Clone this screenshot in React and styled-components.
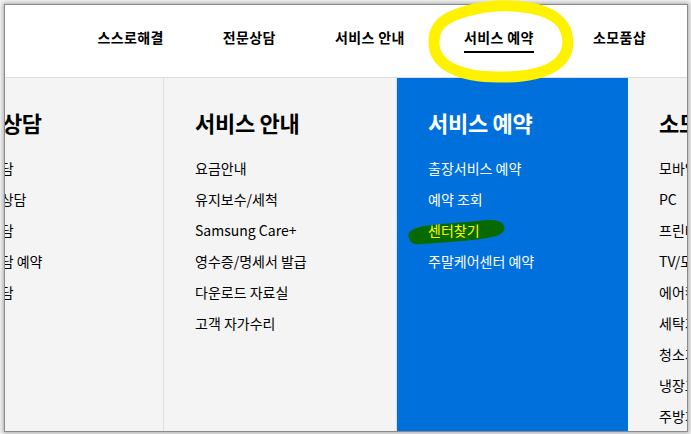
import * as React from "react";
import styled, { createGlobalStyle } from "styled-components";

const GlobalStyle = createGlobalStyle`
  html, body {
    margin: 0;
    padding: 0;
    background: #fff;
  }
  body {
    font-family: "Noto Sans CJK KR", "Noto Sans", sans-serif;
    color: #000;
  }
`;

const Page = styled.div`
  position: relative;
  width: 691px;
  height: 434px;
  overflow: hidden;
  background: #f2f2f2;
`;

const Frame = styled.div`
  position: absolute;
  left: 4px;
  top: 4px;
  width: 682px;
  height: 426px;
  border: 1px solid #8a8a8a;
  box-shadow: 0 0 4px 1px rgba(0, 0, 0, 0.3);
  background: #f4f4f4;
  overflow: hidden;
  display: flex;
  flex-direction: column;
`;

const Header = styled.header`
  height: 73px;
  flex: none;
  background: #fff;
  border-bottom: 1px solid #dcdcdc;
  display: flex;
  justify-content: flex-end;
  align-items: center;
  padding-right: 41px;
  padding-bottom: 9px;
  box-sizing: border-box;
`;

const Nav = styled.nav`
  display: flex;
  gap: 59px;
`;

const NavItem = styled.a`
  position: relative;
  font-size: 14px;
  font-weight: 700;
  line-height: 18px;
  letter-spacing: 0.4px;
  color: #000;
  white-space: nowrap;

  &::after {
    content: "";
    display: ${(p) => (p.$active ? "block" : "none")};
    position: absolute;
    left: 0;
    right: 0;
    bottom: -7px;
    height: 2px;
    background: #000;
  }
`;

const Panel = styled.div`
  flex: 1;
  display: flex;
  margin-left: -74px;
`;

const Column = styled.div`
  flex: none;
  width: ${(p) => (p.$active ? "231px" : "233px")};
  box-sizing: border-box;
  padding: 31px 0 0 31px;
  border-right: 1px solid ${(p) => (p.$active ? "transparent" : "#dedede")};
  background: ${(p) => (p.$active ? "#0071dc" : "transparent")};
  color: ${(p) => (p.$active ? "#fff" : "#000")};
  white-space: nowrap;
`;

const Title = styled.h2`
  margin: 0 0 18px;
  font-size: 22px;
  font-weight: 700;
  line-height: 26px;
  letter-spacing: -0.3px;
`;

const List = styled.ul`
  list-style: none;
  margin: 0;
  padding: 0;
`;

const Item = styled.li`
  position: relative;
  z-index: 0;
  font-size: 14px;
  line-height: 31px;
  color: ${(p) => (p.$marked ? "#ffff00" : "inherit")};
`;

const Scribble = styled.svg`
  position: absolute;
  left: -23px;
  top: 0;
  width: 110px;
  height: 31px;
  z-index: -1;
  overflow: visible;
`;

const Marker = styled.svg`
  position: absolute;
  left: 0;
  top: 0;
  width: 691px;
  height: 434px;
  pointer-events: none;
`;

const columns = [
  {
    title: "전문상담",
    items: ["채팅상담", "이메일상담", "전화상담", "원격상담 예약", "방문상담"],
  },
  {
    title: "서비스 안내",
    items: [
      "요금안내",
      "유지보수/세척",
      "Samsung Care+",
      "영수증/명세서 발급",
      "다운로드 자료실",
      "고객 자가수리",
    ],
  },
  {
    title: "서비스 예약",
    active: true,
    items: ["출장서비스 예약", "예약 조회", "센터찾기", "주말케어센터 예약"],
  },
  {
    title: "소모품샵",
    items: [
      "모바일",
      "PC",
      "프린터",
      "TV/모니터",
      "에어컨",
      "세탁기",
      "청소기",
      "냉장고",
      "주방가전",
    ],
  },
];

const navItems = ["스스로해결", "전문상담", "서비스 안내", "서비스 예약", "소모품샵"];

const App = () => {
  return (
    <Page>
      <GlobalStyle />
      <Frame>
        <Header>
          <Nav>
            {navItems.map((n) => (
              <NavItem key={n} $active={n === "서비스 예약"}>
                {n}
              </NavItem>
            ))}
          </Nav>
        </Header>
        <Panel>
          {columns.map((col) => (
            <Column key={col.title} $active={col.active}>
              <Title>{col.title}</Title>
              <List>
                {col.items.map((it) => (
                  <Item key={it} $marked={it === "센터찾기"}>
                    {it === "센터찾기" && (
                      <Scribble viewBox="0 0 110 31">
                        <path
                          d="M4 23 C1 16 10 12 26 10 L84 5 C100 4 104 15 94 20 C82 25 44 27 18 29 C8 30 5 28 4 23 Z"
                          fill="#066a00"
                        />
                      </Scribble>
                    )}
                    {it}
                  </Item>
                ))}
              </List>
            </Column>
          ))}
        </Panel>
      </Frame>
      <Marker viewBox="0 0 691 434">
        <path
          d="M466 11 C508 0 562 6 567 35 C573 63 546 77 503 77 C460 78 434 65 434 43 C433 22 450 14 480 8"
          fill="none"
          stroke="#fff200"
          strokeWidth="11"
          strokeLinecap="round"
        />
      </Marker>
    </Page>
  );
};

export default App;
